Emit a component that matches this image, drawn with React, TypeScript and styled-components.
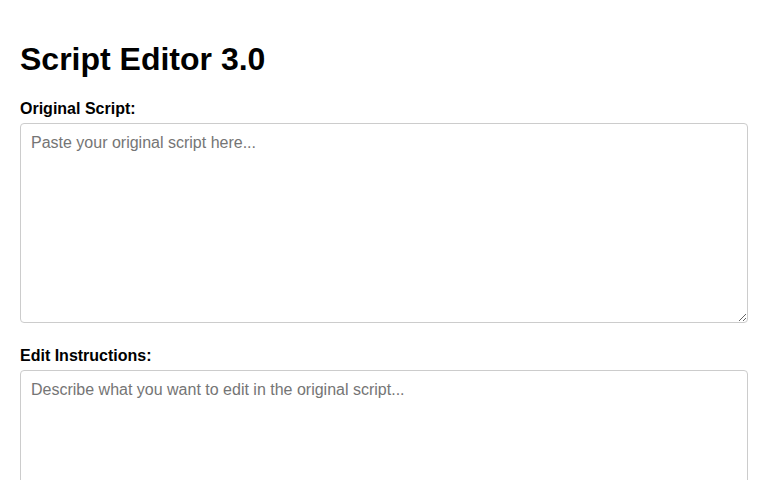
import React from 'react'
import styled, { createGlobalStyle } from 'styled-components'

const GlobalStyle = createGlobalStyle`
  body {
    margin: 0;
    font-family: "Liberation Sans", Arial, sans-serif;
    background: #fff;
    color: #000;
  }
`

const Page = styled.div`
  padding: 20px;
`

const Title = styled.h1`
  font-size: 32px;
  font-weight: bold;
  margin: 21.44px 0;
`

const Field = styled.div`
  margin-bottom: 20px;
`

const Label = styled.label`
  display: block;
  font-weight: bold;
  font-size: 16px;
  margin-bottom: 5px;
`

// left inline so the line box adds its small gap below, as in the reference
const TextArea = styled.textarea`
  box-sizing: border-box;
  width: 100%;
  height: 200px;
  padding: 10px;
  border: 1px solid #ccc;
  border-radius: 4px;
  font-family: "Liberation Sans", Arial, sans-serif;
  font-size: 16px;
  &::placeholder {
    color: #757575;
  }
`

const App = () => {
  return (
    <Page>
      <GlobalStyle />
      <Title>Script Editor 3.0</Title>
      <Field>
        <Label htmlFor="original">Original Script:</Label>
        <TextArea id="original" placeholder="Paste your original script here..." />
      </Field>
      <Field>
        <Label htmlFor="instructions">Edit Instructions:</Label>
        <TextArea
          id="instructions"
          placeholder="Describe what you want to edit in the original script..."
        />
      </Field>
    </Page>
  )
}

export default App
